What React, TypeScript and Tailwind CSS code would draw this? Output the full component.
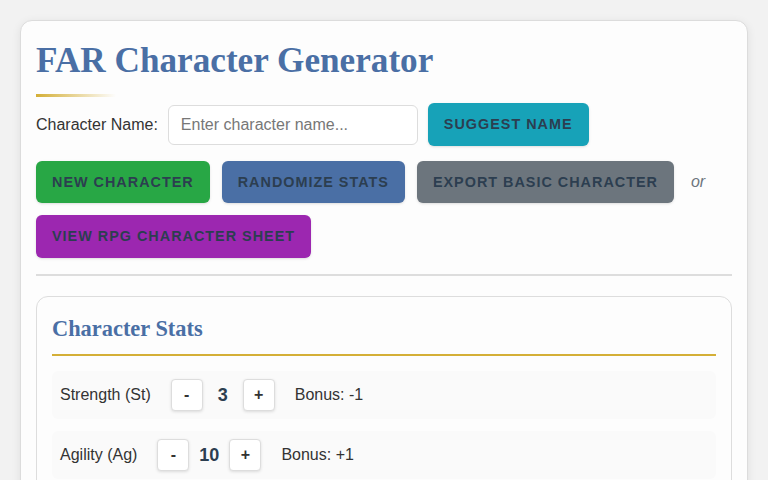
import React, { useState } from "react";

type Stat = { name: string; abbr: string; value: number };

const initialStats: Stat[] = [
  { name: "Strength", abbr: "St", value: 3 },
  { name: "Agility", abbr: "Ag", value: 10 },
  { name: "Intellect", abbr: "In", value: 8 },
  { name: "Willpower", abbr: "Wi", value: 7 },
];

function bonusFor(v: number): string {
  const b = v <= 4 ? -1 : v >= 10 ? 1 : 0;
  return b > 0 ? `+${b}` : `${b}`;
}

const btnBase =
  "rounded-md px-4 py-3 text-[14.4px] leading-[18px] font-bold uppercase tracking-[1px] text-[#2c3e50] shadow-sm";

export default function App() {
  const [stats, setStats] = useState<Stat[]>(initialStats);
  const [name, setName] = useState("");

  const bump = (i: number, d: number) =>
    setStats((s) => s.map((x, j) => (j === i ? { ...x, value: x.value + d } : x)));

  return (
    <div
      className="min-h-screen bg-[#f2f2f2] p-5"
      style={{ fontFamily: '"Liberation Sans", Arial, sans-serif' }}
    >
      <div className="rounded-xl border border-[#dcdcdc] bg-[#fdfdfd] p-[15px] shadow-[0_2px_10px_rgba(0,0,0,0.08)]">
        <h1
          className="mt-[5px] text-[35.2px] font-bold leading-[1.15] text-[#4a6fa5]"
          style={{ fontFamily: '"Liberation Serif", "Times New Roman", serif' }}
        >
          FAR Character Generator
        </h1>
        <div className="mt-[13px] h-[3px] w-20 bg-gradient-to-r from-[#d4af37] to-transparent" />

        <div className="mt-[6px] flex items-center gap-2.5">
          <label className="text-base text-[#333]">Character Name:</label>
          <input
            value={name}
            onChange={(e) => setName(e.target.value)}
            placeholder="Enter character name..."
            className="h-10 w-[250px] rounded-md border border-[#ddd] bg-white px-3 text-base text-[#333] placeholder:text-[#777] outline-none"
          />
          <button className={`${btnBase} bg-[#17a2b8] leading-[19px]`}>Suggest Name</button>
        </div>

        <div className="mt-[15px] flex flex-wrap items-center gap-3">
          <button className={`${btnBase} bg-[#28a745]`}>New Character</button>
          <button className={`${btnBase} bg-[#4a6fa5]`}>Randomize Stats</button>
          <button className={`${btnBase} bg-[#6c757d]`}>Export Basic Character</button>
          <span className="ml-[5px] text-base italic text-[#6c757d]">or</span>
          <button className={`${btnBase} bg-[#9c27b0] leading-[19px]`}>View RPG Character Sheet</button>
        </div>

        <div className="mt-4 h-[2px] bg-[#ddd]" />

        <div className="mt-5 rounded-xl border border-[#ddd] bg-[#fdfdfd] p-[15px]">
          <h2
            className="mt-[4px] border-b-2 border-[#d4af37] pb-[12px] text-[22.4px] font-bold leading-[1.15] text-[#4a6fa5]"
            style={{ fontFamily: '"Liberation Serif", "Times New Roman", serif' }}
          >
            Character Stats
          </h2>
          <div className="mt-[15px] flex flex-col gap-3">
            {stats.map((s, i) => (
              <div
                key={s.abbr}
                className="flex items-center gap-5 rounded-md bg-[#fafafa] px-2 py-2"
              >
                <span className="text-base text-[#333]">
                  {s.name} ({s.abbr})
                </span>
                <div className="flex items-center">
                  <button
                    onClick={() => bump(i, -1)}
                    className="h-8 w-8 rounded border border-[#ddd] bg-white text-base font-bold text-[#333] shadow-[0_1px_3px_rgba(0,0,0,0.12)]"
                  >
                    -
                  </button>
                  <span className="w-10 text-center text-lg font-bold text-[#2c3e50]">
                    {s.value}
                  </span>
                  <button
                    onClick={() => bump(i, 1)}
                    className="h-8 w-8 rounded border border-[#ddd] bg-white text-base font-bold text-[#333] shadow-[0_1px_3px_rgba(0,0,0,0.12)]"
                  >
                    +
                  </button>
                </div>
                <span className="text-base text-[#333]">Bonus: {bonusFor(s.value)}</span>
              </div>
            ))}
          </div>
        </div>
      </div>
    </div>
  );
}
